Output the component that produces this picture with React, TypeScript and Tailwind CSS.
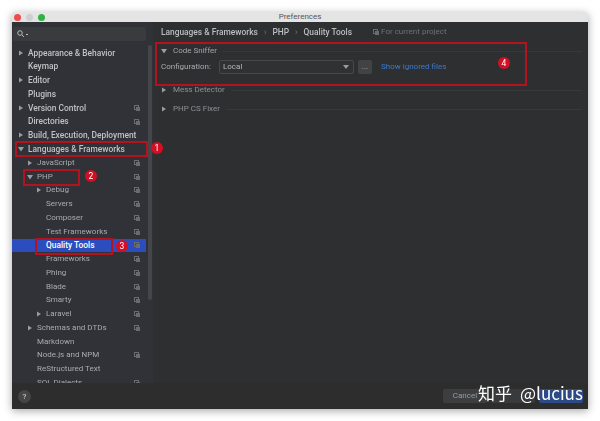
const F = "font-['Roboto','Inter','Liberation_Sans',sans-serif]";

function Copy() {
  return (
    <svg width="6" height="6" viewBox="0 0 6 6" className="shrink-0">
      <rect x="0.5" y="0.5" width="4" height="4" fill="none" stroke="#686b6f" strokeWidth="1" />
      <rect x="2" y="2" width="4" height="4" fill="#686b6f" />
    </svg>
  );
}

function Tri({ open = false }: { open?: boolean }) {
  return (
    <svg width="6" height="6" viewBox="0 0 6 6" className="shrink-0">
      <path d={open ? "M0 1h6L3 5.5z" : "M1 0.5l4 2.5L1 5.5z"} fill="#9a9da0" />
    </svg>
  );
}

type Row = { t: string; d: number; arrow?: "r" | "o"; copy?: boolean; bold?: boolean; sel?: boolean };

const rows: Row[] = [
  { t: "Appearance & Behavior", d: 0, arrow: "r", bold: true },
  { t: "Keymap", d: 0, bold: true },
  { t: "Editor", d: 0, arrow: "r", bold: true },
  { t: "Plugins", d: 0, bold: true },
  { t: "Version Control", d: 0, arrow: "r", copy: true, bold: true },
  { t: "Directories", d: 0, copy: true, bold: true },
  { t: "Build, Execution, Deployment", d: 0, arrow: "r", bold: true },
  { t: "Languages & Frameworks", d: 0, arrow: "o", bold: true },
  { t: "JavaScript", d: 1, arrow: "r", copy: true },
  { t: "PHP", d: 1, arrow: "o", copy: true },
  { t: "Debug", d: 2, arrow: "r", copy: true },
  { t: "Servers", d: 2, copy: true },
  { t: "Composer", d: 2, copy: true },
  { t: "Test Frameworks", d: 2, copy: true },
  { t: "Quality Tools", d: 2, copy: true, sel: true },
  { t: "Frameworks", d: 2, copy: true },
  { t: "Phing", d: 2, copy: true },
  { t: "Blade", d: 2, copy: true },
  { t: "Smarty", d: 2, copy: true },
  { t: "Laravel", d: 2, arrow: "r", copy: true },
  { t: "Schemas and DTDs", d: 1, arrow: "r", copy: true },
  { t: "Markdown", d: 1 },
  { t: "Node.js and NPM", d: 1, copy: true },
  { t: "ReStructured Text", d: 1 },
  { t: "SQL Dialects", d: 1, copy: true },
];

const pad = ["pl-[6px]", "pl-[15px]", "pl-[24px]"];

function TreeRow({ r }: { r: Row }) {
  return (
    <div className={`flex items-center h-[13.75px] shrink-0 pr-[6px] ${pad[r.d]} ${r.sel ? "bg-[#2b4dbd]" : ""}`}>
      <div className="w-[10px] shrink-0 flex items-center">{r.arrow ? <Tri open={r.arrow === "o"} /> : null}</div>
      <span
        className={`flex-1 leading-none whitespace-nowrap ${
          r.sel
            ? "text-[8.4px] text-white font-medium"
            : r.bold
              ? "text-[8.4px] text-[#c0c2c5] font-medium"
              : "text-[8px] text-[#a9abae]"
        }`}
      >
        {r.t}
      </span>
      {r.copy ? <Copy /> : null}
    </div>
  );
}

function Mark({ className }: { className: string }) {
  return <div className={`absolute border-[2.5px] border-[#b5121f] ${className}`} />;
}

function Badge({ n, className }: { n: number; className: string }) {
  return (
    <div className={`absolute w-[12px] h-[12px] rounded-full bg-[#d40f24] text-white text-[8.5px] leading-[12px] text-center ${className}`}>
      {n}
    </div>
  );
}

export default function App() {
  return (
    <div className={`relative w-[600px] h-[421px] bg-white overflow-hidden p-[12px] ${F}`}>
      <div className="w-[576px] h-[397px] flex flex-col shadow-[0_2px_8px_rgba(0,0,0,0.35)] rounded-t-[3px] overflow-hidden blur-[0.3px]">
        {/* title bar */}
        <div className="relative h-[10px] shrink-0 bg-[#e4e4e4] flex items-center justify-center">
          <div className="absolute left-[2px] top-[-2px] flex gap-[5px] items-center h-[14px]">
            <span className="w-[7px] h-[7px] rounded-full bg-[#ee4b4f]" />
            <span className="w-[7px] h-[7px] rounded-full bg-[#cfcfcf]" />
            <span className="w-[7px] h-[7px] rounded-full bg-[#2fb344]" />
          </div>
          <span className="text-[8px] leading-none text-[#555]">Preferences</span>
        </div>
        <div className="flex-1 flex min-h-0 bg-[#2e2f31]">
          {/* sidebar */}
          <div className="w-[141px] shrink-0 flex gap-[2px] bg-[#303237]">
            <div className="w-[134px] flex flex-col min-h-0 overflow-hidden">
              <div className="h-[14px] mt-[5px] ml-[1px] shrink-0 bg-[#3a3b3f] rounded-[2px] flex items-center pl-[4px] gap-[1px]">
                <svg width="8" height="8" viewBox="0 0 8 8" fill="none" stroke="#b8babc" strokeWidth="1">
                  <circle cx="3" cy="3" r="2.3" />
                  <path d="M4.8 4.8L7 7" />
                </svg>
                <span className="w-[2px] h-[1px] bg-[#b8babc]" />
              </div>
              <div className="flex flex-col pt-[5px] min-h-0 overflow-hidden">
                {rows.map((r) => (
                  <TreeRow key={r.t} r={r} />
                ))}
              </div>
            </div>
            <div className="w-[4px] mt-[23px] h-[255px] bg-[#44464a] rounded-[2px]" />
          </div>
          {/* main */}
          <div className="flex-1 min-w-0 flex flex-col pl-[8px] pr-[6px]">
            <div className="flex items-center h-[20px] shrink-0 text-[8.4px] leading-none font-medium text-[#bcbec0]">
              <span>Languages &amp; Frameworks</span>
              <span className="mx-[6px] text-[#77797c] font-normal">›</span>
              <span>PHP</span>
              <span className="mx-[6px] text-[#77797c] font-normal">›</span>
              <span>Quality Tools</span>
              <span className="ml-[21px] flex items-center gap-[2px] text-[8px] font-normal text-[#6f7174]">
                <Copy />
                For current project
              </span>
            </div>
            <div className="flex items-center gap-[6px] h-[14px] mt-[2px] shrink-0">
              <Tri open />
              <span className="text-[8px] leading-none text-[#a3a5a8]">Code Sniffer</span>
              <div className="flex-1 h-px bg-[#37383a]" />
            </div>
            <div className="flex items-center h-[18px] shrink-0">
              <span className="w-[58px] text-[8px] leading-none text-[#a9abae]">Configuration:</span>
              <div className="w-[135px] h-[14px] flex items-center justify-between pl-[3px] pr-[4px] bg-[#303133] border border-[#47494b] rounded-[2px]">
                <span className="text-[8px] leading-none text-[#b4b6b8]">Local</span>
                <svg width="6" height="4" viewBox="0 0 6 4"><path d="M0 0h6L3 4z" fill="#9a9da0" /></svg>
              </div>
              <div className="ml-[4px] w-[14px] h-[14px] bg-[#414345] rounded-[2px] text-[8px] leading-[14px] text-center text-[#a9abae]">...</div>
              <span className="ml-[9px] text-[8px] leading-none text-[#3f78c9]">Show ignored files</span>
            </div>
            <div className="flex items-center gap-[6px] h-[14px] mt-[7px] shrink-0">
              <Tri />
              <span className="text-[8px] leading-none text-[#8f9194]">Mess Detector</span>
              <div className="flex-1 h-px bg-[#37383a]" />
            </div>
            <div className="flex items-center gap-[6px] h-[14px] mt-[5px] shrink-0">
              <Tri />
              <span className="text-[8px] leading-none text-[#8f9194]">PHP CS Fixer</span>
              <div className="flex-1 h-px bg-[#37383a]" />
            </div>
          </div>
        </div>
        {/* footer */}
        <div className="h-[26px] shrink-0 bg-[#2d2d2d] flex items-center justify-between pl-[6px] pr-[5px]">
          <div className="w-[13px] h-[13px] rounded-full bg-[#454545] text-[8px] leading-[13px] text-center font-medium text-[#c4c4c4]">?</div>
          <div className="flex gap-[4px]">
            <div className="w-[44px] h-[14px] rounded-[2px] bg-[#3d3e40] text-[8px] leading-[14px] text-center text-[#9a9a9a]">Cancel</div>
            <div className="w-[44px] h-[14px] rounded-[2px] bg-[#383a3c]" />
            <div className="w-[44px] h-[14px] rounded-[2px] bg-[#2c4a86]" />
          </div>
        </div>
      </div>

      {/* annotations over the screenshot */}
      <Mark className="left-[15px] top-[141px] w-[133px] h-[16px]" />
      <Mark className="left-[23px] top-[169px] w-[57px] h-[17px]" />
      <Mark className="left-[35px] top-[238px] w-[78px] h-[17px]" />
      <Mark className="left-[155px] top-[42px] w-[372px] h-[44px]" />
      <Badge n={1} className="left-[151px] top-[142px]" />
      <Badge n={2} className="left-[85px] top-[170px]" />
      <Badge n={3} className="left-[116px] top-[240px]" />
      <Badge n={4} className="left-[498px] top-[57px]" />
      <div className="absolute left-[478px] top-[384px] flex items-center gap-[8px] text-white text-[17px] leading-none whitespace-nowrap font-['Noto_Sans_CJK_SC','Noto_Sans',sans-serif]">
        <span>知乎</span>
        <span>@lucius</span>
      </div>
    </div>
  );
}
